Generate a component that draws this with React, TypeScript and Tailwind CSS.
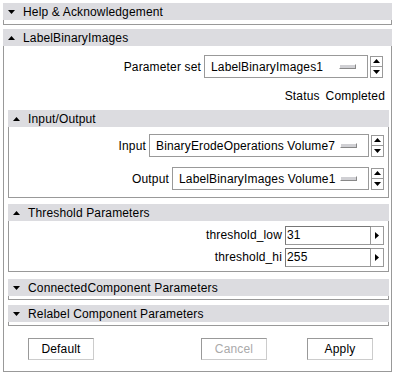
import React from 'react'

const Tri = ({ dir }: { dir: 'up' | 'down' | 'right' }) => {
  if (dir === 'right')
    return (
      <svg width="4" height="7" viewBox="0 0 4 7">
        <path d="M0 0 L4 3.5 L0 7 Z" fill="#000" />
      </svg>
    )
  return (
    <svg width="7" height="4" viewBox="0 0 7 4">
      <path d={dir === 'up' ? 'M0 4 L3.5 0 L7 4 Z' : 'M0 0 L7 0 L3.5 4 Z'} fill="#000" />
    </svg>
  )
}

const Header = ({ title, open }: { title: string; open: boolean }) => (
  <div className="flex h-[17px] items-center gap-[8px] bg-[#dcdce0] pl-[5px]">
    <Tri dir={open ? 'up' : 'down'} />
    <span className="whitespace-nowrap leading-none">{title}</span>
  </div>
)

const Collapsed = ({ title }: { title: string }) => (
  <div>
    <Header title={title} open={false} />
    <div className="h-[4px] border border-t-0 border-[#999]" />
  </div>
)

const Spinner = () => (
  <div className="flex flex-col">
    <div className="flex h-[11px] w-[13px] items-center justify-center border border-[#999] bg-white">
      <Tri dir="up" />
    </div>
    <div className="flex h-[11px] w-[13px] items-center justify-center border border-t-0 border-[#999] bg-white">
      <Tri dir="down" />
    </div>
  </div>
)

const Combo = ({ value, width }: { value: string; width: string }) => (
  <div className="flex items-center gap-[2px]">
    <div className={`flex h-[23px] items-center justify-between border border-[#999] bg-white pl-[6px] pr-[11px] ${width}`}>
      <span className="whitespace-nowrap">{value}</span>
      <span className="h-[5px] w-[17px] shrink-0 border border-t-white border-l-white border-b-[#888] border-r-[#888] bg-[#d0d0d4]" />
    </div>
    <Spinner />
  </div>
)

const NumField = ({ label, value }: { label: string; value: string }) => (
  <div className="flex items-center justify-end">
    <span className="mr-[3px] whitespace-nowrap">{label}</span>
    <div className="flex h-[19px] w-[86px] items-center border border-[#999] border-t-[#777] border-l-[#777] bg-white pl-[1px]">
      {value}
    </div>
    <div className="flex h-[19px] w-[13px] items-center justify-center border border-l-0 border-[#999] bg-white">
      <Tri dir="right" />
    </div>
  </div>
)

const Btn = ({ label, disabled }: { label: string; disabled?: boolean }) => (
  <button
    className={`h-[22px] w-[66px] border border-[#999] border-r-[#ccc] border-b-[#ccc] bg-white ${disabled ? 'text-[#aaa]' : 'text-black'}`}
  >
    {label}
  </button>
)

export default function App() {
  return (
    <div
      className="h-[375px] w-[395px] overflow-hidden bg-white px-[3px] pt-[3px] text-[12px] tracking-[0.15px] text-black"
      style={{ fontFamily: '"Liberation Sans", Arial, sans-serif' }}
    >
      <div>
        <Header title="Help & Acknowledgement" open={false} />
        <div className="h-[5px] border border-t-0 border-[#999]" />
      </div>

      <div className="mt-[4px]">
        <Header title="LabelBinaryImages" open={true} />
        <div className="flex h-[326px] flex-col border border-t-0 border-[#999] pl-[4px] pr-[2px]">
          <div className="mt-[9px] flex items-center justify-end gap-[3px] pr-[6px]">
            <span className="whitespace-nowrap">Parameter set</span>
            <Combo value="LabelBinaryImages1" width="w-[164px]" />
          </div>
          <div className="mt-[12px] flex justify-end gap-[6px] pr-[4px] leading-none">
            <span>Status</span>
            <span>Completed</span>
          </div>

          <div className="mt-[8px]">
            <Header title="Input/Output" open={true} />
            <div className="flex h-[71px] flex-col justify-center gap-[10px] border border-t-0 border-[#999] pr-[4px]">
              <div className="flex items-center justify-end gap-[3px]">
                <span>Input</span>
                <Combo value="BinaryErodeOperations Volume7" width="w-[220px]" />
              </div>
              <div className="flex items-center justify-end gap-[3px]">
                <span>Output</span>
                <Combo value="LabelBinaryImages Volume1" width="w-[197px]" />
              </div>
            </div>
          </div>

          <div className="mt-[6px]">
            <Header title="Threshold Parameters" open={true} />
            <div className="flex h-[51px] flex-col justify-center gap-[3px] border border-t-0 border-[#999] pr-[4px]">
              <NumField label="threshold_low" value="31" />
              <NumField label="threshold_hi" value="255" />
            </div>
          </div>

          <div className="mt-[7px]">
            <Collapsed title="ConnectedComponent Parameters" />
          </div>
          <div className="mt-[5px]">
            <Collapsed title="Relabel Component Parameters" />
          </div>

          <div className="mt-[12px] flex items-center pl-[20px]">
            <Btn label="Default" />
            <div className="ml-[107px]">
              <Btn label="Cancel" disabled />
            </div>
            <div className="ml-[40px]">
              <Btn label="Apply" />
            </div>
          </div>
        </div>
      </div>
    </div>
  )
}
